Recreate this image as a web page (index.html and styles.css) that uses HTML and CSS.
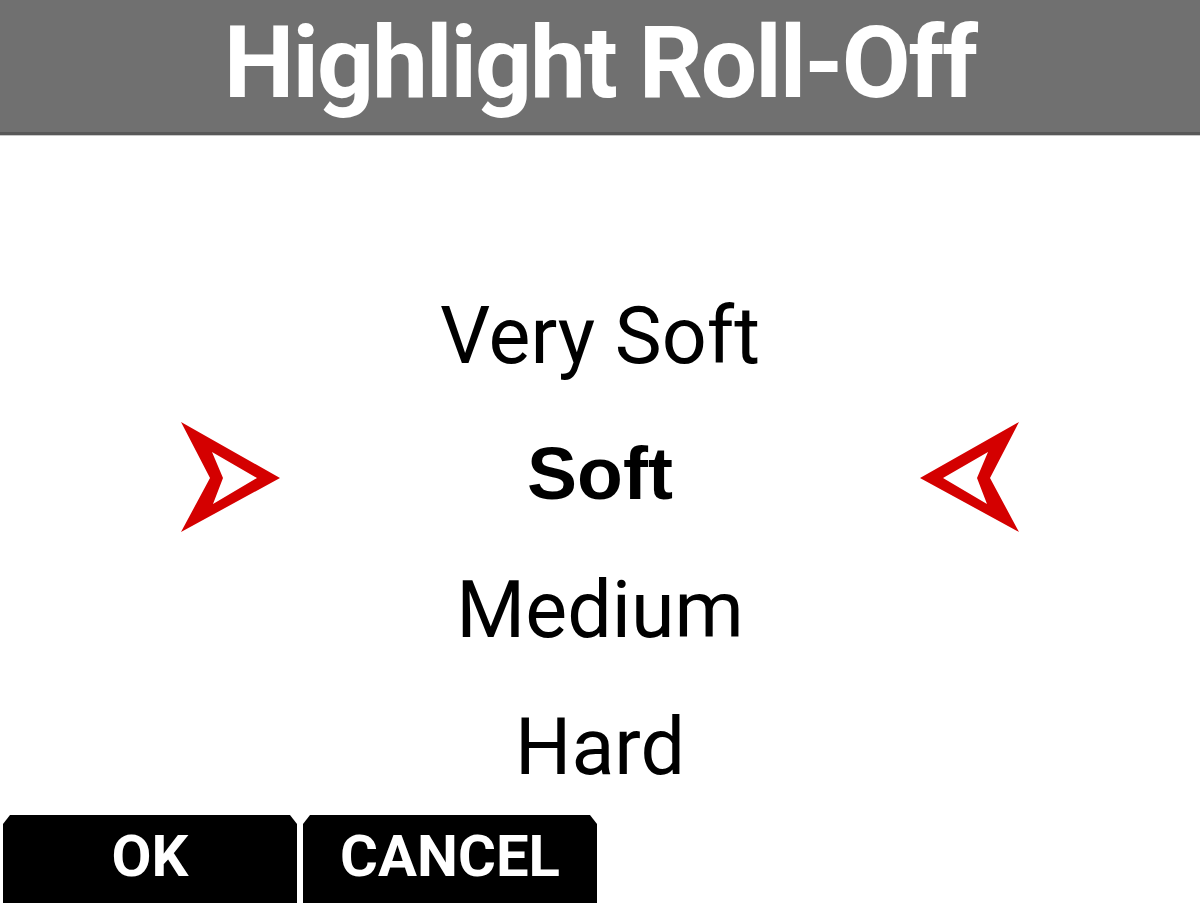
FILE: index.html
```html
<!DOCTYPE html>
<html lang="en">
<head>
    <meta charset="UTF-8">
    <meta name="viewport" content="width=device-width, initial-scale=1.0">
    <title>Highlight Roll-Off</title>
    <link rel="stylesheet" href="styles.css">
</head>
<body>
    <div class="screen">
        <header class="title-bar">
            <h1>Highlight Roll-Off</h1>
        </header>

        <ul class="options">
            <li>Very Soft</li>
            <li class="selected">
                <svg class="marker" width="100" height="112" viewBox="0 0 100 112">
                    <path fill-rule="evenodd" d="M1 2 L100 58 L1 112 L30 58 Z M32 32 L77 58 L33 84 L43 58 Z"/>
                </svg>
                <span>Soft</span>
                <svg class="marker" width="100" height="112" viewBox="0 0 100 112">
                    <path fill-rule="evenodd" d="M99 2 L0 58 L99 112 L70 58 Z M68 32 L23 58 L67 84 L57 58 Z"/>
                </svg>
            </li>
            <li>Medium</li>
            <li>Hard</li>
        </ul>

        <div class="softkeys">
            <button class="softkey">OK</button>
            <button class="softkey">CANCEL</button>
        </div>
    </div>
</body>
</html>
```

FILE: styles.css
```css
html, body {
    margin: 0;
    padding: 0;
    background: #fff;
}

body {
    font-family: 'Roboto', 'Liberation Sans', sans-serif;
    color: #000;
}

.screen {
    width: 1200px;
    height: 903px;
    overflow: hidden;
    display: flex;
    flex-direction: column;
}

.title-bar {
    height: 132px;
    background: #707070;
    border-bottom: 3px solid #585858;
    box-shadow: 0 1px 0 #c8c8c8;
}

.title-bar h1 {
    margin: 0;
    text-align: center;
    color: #fff;
    font-size: 100px;
    font-weight: 700;
    letter-spacing: -2px;
    line-height: 126px;
}

.options {
    list-style: none;
    margin: 0;
    padding: 133px 0 0;
    display: flex;
    flex-direction: column;
    align-items: center;
}

.options li {
    height: 137px;
    line-height: 137px;
    font-size: 79px;
    text-align: center;
}

.options li.selected {
    width: 840px;
    display: flex;
    align-items: center;
    justify-content: space-between;
    font-family: 'Liberation Sans', Arial, sans-serif;
    font-size: 75px;
    font-weight: 700;
}

.marker {
    fill: #d40000;
    margin-top: 4px;
}

.softkeys {
    display: flex;
    gap: 6px;
    padding-left: 3px;
    margin-top: -1px;
}

.softkey {
    width: 294px;
    height: 88px;
    border: none;
    padding: 0 0 6px;
    background: #000;
    color: #fff;
    font-family: inherit;
    font-size: 58px;
    font-weight: 700;
    line-height: 82px;
    clip-path: polygon(7px 0, calc(100% - 7px) 0, 100% 9px, 100% 100%, 0 100%, 0 9px);
}
```
